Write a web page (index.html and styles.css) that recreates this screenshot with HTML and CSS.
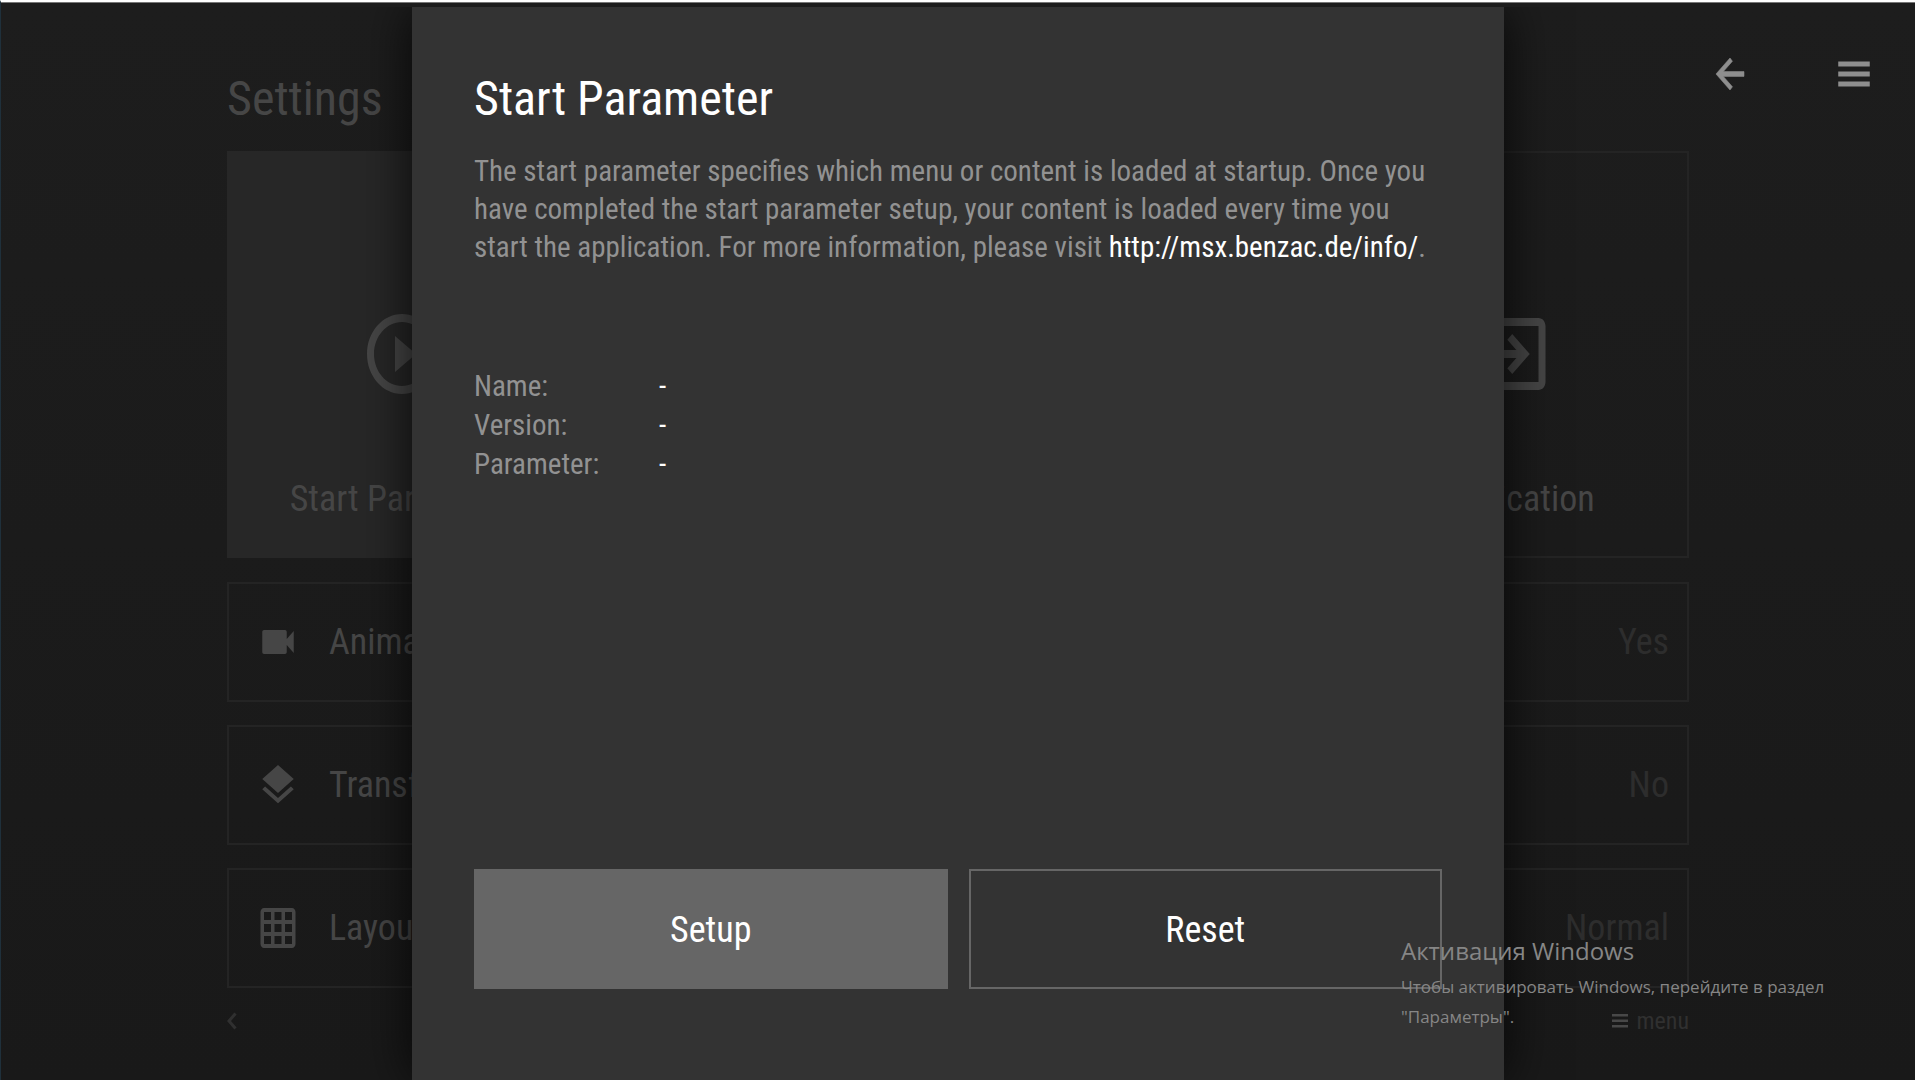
FILE: index.html
```
<!DOCTYPE html>
<html lang="en">
<head>
    <meta charset="UTF-8">
    <meta name="viewport" content="width=device-width, initial-scale=1.0">
    <title>Start Parameter</title>
    <link rel="stylesheet" href="styles.css">
</head>
<body>
    <div class="app">
        <!-- Settings page -->
        <main class="settings">
            <h1>Settings</h1>
            <div class="tiles">
                <button class="tile selected">
                    <svg class="icon-large" viewBox="0 0 24 24" preserveAspectRatio="none"><path d="M10 16.5l6-4.5-6-4.5v9zM12 2C6.48 2 2 6.48 2 12s4.48 10 10 10 10-4.48 10-10S17.52 2 12 2zm0 18c-4.41 0-8-3.59-8-8s3.59-8 8-8 8 3.59 8 8-3.59 8-8 8z"/></svg>
                    <span>Start Parameter</span>
                </button>
                <button class="tile last">
                    <svg class="icon-large" viewBox="0 0 24 24" preserveAspectRatio="none"><path d="M10.09 15.59L11.5 17l5-5-5-5-1.41 1.41L12.67 11H3v2h9.67l-2.58 2.59zM19 3H5c-1.11 0-2 .9-2 2v4h2V5h14v14H5v-4H3v4c0 1.1.89 2 2 2h14c1.1 0 2-.9 2-2V5c0-1.1-.9-2-2-2z"/></svg>
                    <span>Application</span>
                </button>
            </div>
            <button class="row">
                <svg class="icon" viewBox="0 0 24 24" preserveAspectRatio="none"><path d="M17 10.5V7c0-.55-.45-1-1-1H4c-.55 0-1 .45-1 1v10c0 .55.45 1 1 1h12c.55 0 1-.45 1-1v-3.5l4 4v-11l-4 4z"/></svg>
                <span>Animations</span>
                <span class="value">Yes</span>
            </button>
            <button class="row">
                <svg class="icon" viewBox="0 0 24 24" preserveAspectRatio="none"><path d="M11.99 18.54l-7.37-5.73L3 14.07l9 7 9-7-1.63-1.27-7.38 5.74zM12 16l7.36-5.73L21 9l-9-7-9 7 1.63 1.27L12 16z"/></svg>
                <span>Transform</span>
                <span class="value">No</span>
            </button>
            <button class="row">
                <svg class="icon" viewBox="0 0 24 24" preserveAspectRatio="none"><path d="M20 2H4c-1.1 0-2 .9-2 2v16c0 1.1.9 2 2 2h16c1.1 0 2-.9 2-2V4c0-1.1-.9-2-2-2zM8 20H4v-4h4v4zm0-6H4v-4h4v4zm0-6H4V4h4v4zm6 12h-4v-4h4v4zm0-6h-4v-4h4v4zm0-6h-4V4h4v4zm6 12h-4v-4h4v4zm0-6h-4v-4h4v4zm0-6h-4V4h4v4z"/></svg>
                <span>Layout</span>
                <span class="value">Normal</span>
            </button>
            <footer class="hints">
                <svg class="chevron" viewBox="0 0 10 18"><path d="M8.500 1.500L2 9l6.500 7.500"/></svg>
                <span class="hint">
                    <svg class="hint-icon" viewBox="0 0 16 14"><path d="M0 0h16v2.500H0zM0 5.500h16v2.500H0zM0 11h16v2.500H0z"/></svg>
                    menu
                </span>
            </footer>
        </main>

        <!-- Start parameter panel -->
        <div class="overlay">
            <section class="panel">
                <h2>Start Parameter</h2>
                <p>The start parameter specifies which menu or content is loaded at startup. Once you<br>
                have completed the start parameter setup, your content is loaded every time you<br>
                start the application. For more information, please visit <a href="http://msx.benzac.de/info/">http://msx.benzac.de/info/</a>.</p>
                <table>
                    <tr><th>Name:</th><td>-</td></tr>
                    <tr><th>Version:</th><td>-</td></tr>
                    <tr><th>Parameter:</th><td>-</td></tr>
                </table>
                <div class="actions">
                    <button class="action focused">Setup</button>
                    <button class="action">Reset</button>
                </div>
            </section>
        </div>

        <nav class="controls">
            <button aria-label="Back">
                <svg class="icon" viewBox="0 0 24 24" preserveAspectRatio="none"><path d="M20 10.800H8.200l5.200-5.200L12 4l-8 8 8 8 1.400-1.600L8.200 13.200H20z" stroke="currentColor" stroke-width="0.300"/></svg>
            </button>
            <button aria-label="Menu">
                <svg class="icon" viewBox="0 0 24 24" preserveAspectRatio="none"><path d="M3 18.200h18v-2.400H3zM3 13.200h18v-2.400H3zM3 8.200h18V5.800H3z"/></svg>
            </button>
        </nav>
    </div>

    <!-- Windows activation notice -->
    <aside class="watermark">
        <h3>Активация Windows</h3>
        <p>Чтобы активировать Windows, перейдите в раздел<br>"Параметры".</p>
    </aside>
</body>
</html>
```
FILE: styles.css
```
* {
    box-sizing: border-box;
}

body {
    margin: 0;
    background-color: #fff;
    font-family: "Roboto Condensed", Roboto, sans-serif;
}

h1, h2, h3, p {
    margin: 0;
    font-weight: 400;
}

button {
    padding: 0;
    border: none;
    background: none;
    color: inherit;
    font-family: inherit;
    font-size: 36px;
    cursor: pointer;
}

svg {
    display: block;
    fill: currentColor;
}

.app {
    position: relative;
    min-height: 100vh;
    margin-right: 5px;
    border-top: 2px solid #fff;
    border-left: 1px solid #1f303b;
    background: linear-gradient(#1d1d1d, #191919);
    box-shadow: inset 0 1px #777;
    overflow: hidden;
}

/* Settings page */
.settings {
    padding: 69px 226px 0;
    color: #464646;
}

h1, h2 {
    font-size: 48px;
    line-height: 56px;
}

.tiles {
    display: grid;
    grid-template-columns: repeat(4, 1fr);
    gap: 21px;
    margin: 24px 0;
}

.tile {
    display: flex;
    flex-direction: column;
    align-items: center;
    height: 407px;
    padding-top: 153px;
    border: 2px solid #242424;
}

.tile span {
    margin-top: 76px;
    line-height: 42px;
}

.selected {
    border-color: #272727;
    background-color: #272727;
}

.last {
    grid-column: 4;
}

.icon-large {
    width: 84px;
    height: 96px;
}

.icon {
    width: 42px;
    height: 48px;
}

.row {
    display: flex;
    align-items: center;
    gap: 30px;
    width: 100%;
    height: 120px;
    margin-bottom: 23px;
    padding: 0 18px 0 28px;
    border: 2px solid #242424;
}

.value {
    margin-left: auto;
    color: #2d2d2d;
}

.hints {
    display: flex;
    align-items: center;
    justify-content: space-between;
    color: #303030;
    font-size: 24px;
    line-height: 20px;
}

.chevron {
    width: 10px;
    height: 18px;
    fill: none;
    stroke: currentColor;
    stroke-width: 3;
}

.hint {
    display: flex;
    align-items: center;
    gap: 8px;
}

.hint-icon {
    width: 16px;
    height: 14px;
    color: #484848;
}

/* Panel */
.overlay {
    position: absolute;
    top: 5px;
    right: 0;
    bottom: 0;
    left: 0;
    display: flex;
    justify-content: center;
    overflow: hidden;
}

.panel {
    display: flex;
    flex-direction: column;
    width: 1092px;
    max-width: 100%;
    padding: 64px 62px 91px;
    background-color: #333;
    box-shadow: 0 0 48px rgba(0, 0, 0, 0.8);
    color: #929292;
    font-size: 29px;
    line-height: 38px;
}

.panel h2 {
    color: #fff;
}

.panel p {
    margin-top: 25px;
    white-space: nowrap;
}

.panel a {
    color: #fff;
    text-decoration: none;
}

table {
    margin-top: 101px;
    border-collapse: collapse;
    line-height: 39px;
}

th, td {
    padding: 0;
    font-weight: 400;
    text-align: left;
}

th {
    width: 185px;
}

td {
    color: #fff;
}

.actions {
    display: flex;
    gap: 21px;
    margin-top: auto;
}

.action {
    flex: 1;
    height: 120px;
    padding-top: 2px;
    border: 2px solid #666;
    color: #fff;
}

.focused {
    background-color: #666;
}

/* Back and menu buttons */
.controls {
    position: absolute;
    top: 48px;
    right: 40px;
    display: flex;
    gap: 82px;
    color: #8e8e8e;
}

/* Activation notice */
.watermark {
    position: absolute;
    right: 79px;
    bottom: 48px;
    width: 440px;
    color: #868686;
    font-family: "Open Sans", sans-serif;
    font-size: 17px;
    line-height: 30px;
    white-space: nowrap;
}

.watermark h3 {
    margin-bottom: 4px;
    font-size: 24px;
    line-height: 34px;
}
```
